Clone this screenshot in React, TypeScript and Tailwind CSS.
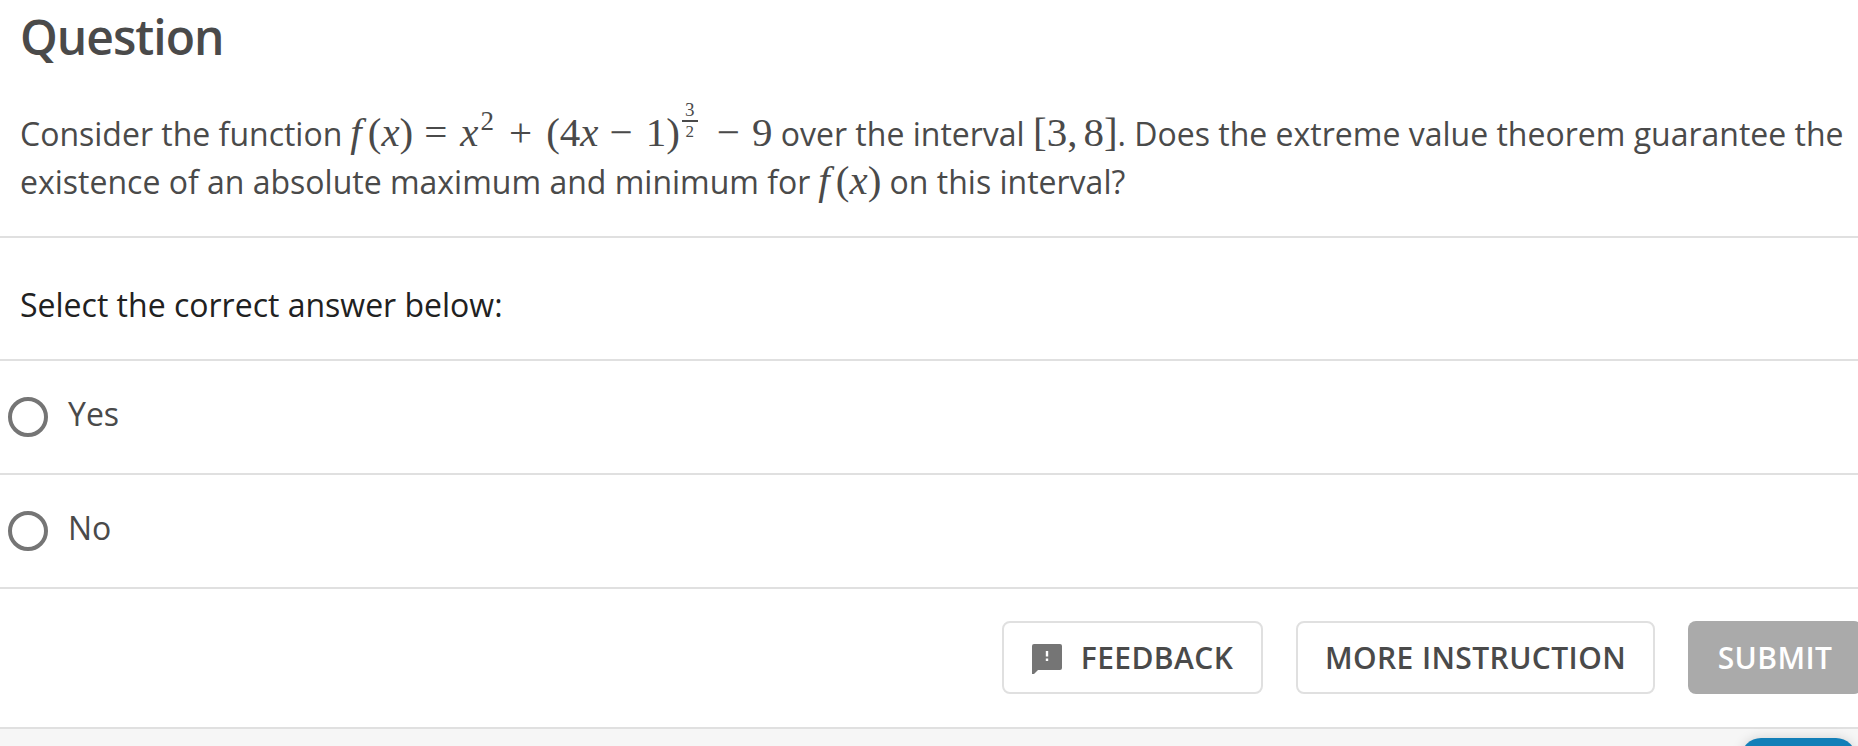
import React from 'react';

const sans = "font-['Open_Sans',sans-serif]";
const serif = "font-['Liberation_Serif',serif] text-[41px] leading-none";

const Mi: React.FC<{ children: React.ReactNode }> = ({ children }) => (
  <span className="italic">{children}</span>
);

const Fx = () => (
  <>
    <span className="ml-[8px] italic">f</span>
    <span className="ml-[6px]">(</span>
    <Mi>x</Mi>)
  </>
);

const Formula = () => (
  <span className={serif}>
    <Fx />
    <span className="ml-[11px]">=</span>
    <span className="ml-[13px]">
      <Mi>x</Mi>
    </span>
    <span className="relative top-[-16px] ml-[2px] text-[27px] leading-none">2</span>
    <span className="ml-[15px]">+</span>
    <span className="ml-[14px]">(</span>4<Mi>x</Mi>
    <span className="ml-[11px]">−</span>
    <span className="ml-[13px]">1</span>)
    <span className="ml-[2px] inline-flex w-[16px] flex-col items-center align-[30px]">
      <span className="w-full border-b-2 border-[#4a4a4a] text-center text-[19px] leading-[20px]">3</span>
      <span className="mt-[1px] text-[17px] leading-[18px]">2</span>
    </span>
    <span className="ml-[19px]">−</span>
    <span className="ml-[12px]">9</span>
  </span>
);

const Option: React.FC<{ label: string }> = ({ label }) => (
  <div className="flex h-[114px] items-center border-b-2 border-[#e0e0e0]">
    <span className="ml-[8px] h-[40px] w-[40px] rounded-full border-[4px] border-[#757575]" />
    <span className="ml-[20px] -mt-[6px] text-[32px] text-[#4a4a4a]">{label}</span>
  </div>
);

const FeedbackIcon = () => (
  <svg width="30" height="30" viewBox="0 0 30 30" className="mr-[19px] mt-[2px]">
    <path d="M2 0h26a2 2 0 0 1 2 2v22a2 2 0 0 1-2 2H6l-4 4h-2V2a2 2 0 0 1 2-2z" fill="#757575" />
    <rect x="13.8" y="7" width="2.4" height="5.5" fill="#fff" />
    <rect x="13.8" y="14.5" width="2.4" height="2.5" fill="#fff" />
  </svg>
);

export default function App() {
  return (
    <div className={`${sans} relative h-[746px] overflow-hidden bg-[#f6f6f6]`}>
      <div className="bg-white">
        <div className="h-[238px] border-b-2 border-[#e0e0e0] px-[20px]">
          <h1 className="pt-[7px] text-[48px] font-semibold leading-[60px] tracking-[-1px] text-[#4a4a4a]">Question</h1>
          <p className="mt-[33px] whitespace-nowrap text-[32px] leading-[48px] text-[#4a4a4a]">
            Consider the function
            <Formula /> over the interval{' '}
            <span className={serif}>
              [3,<span className="ml-[6px]">8</span>]
            </span>
            . Does the extreme value theorem guarantee the
            <br />
            existence of an absolute maximum and minimum for
            <span className={serif}>
              <Fx />
            </span>{' '}
            on this interval?
          </p>
        </div>
        <div className="flex h-[123px] items-center border-b-2 border-[#e0e0e0] px-[20px] pt-[13px]">
          <span className="text-[32px] text-[#212121]">Select the correct answer below:</span>
        </div>
        <Option label="Yes" />
        <Option label="No" />
        <div className="mr-[-4px] flex h-[140px] items-start justify-end gap-[33px] border-b-2 border-[#e0e0e0] pt-[32px]">
          <button className="flex h-[73px] w-[261px] items-center justify-center rounded-[8px] border-2 border-[#e0e0e0] bg-white text-[30px] font-semibold tracking-[0.4px] text-[#4a4a4a]">
            <FeedbackIcon />
            FEEDBACK
          </button>
          <button className="h-[73px] w-[359px] rounded-[8px] border-2 border-[#e0e0e0] bg-white text-[30px] font-semibold tracking-[0.4px] text-[#4a4a4a]">
            MORE INSTRUCTION
          </button>
          <button className="h-[73px] w-[174px] rounded-[8px] bg-[#aaaaaa] text-[30px] font-semibold tracking-[0.4px] text-white">
            SUBMIT
          </button>
        </div>
      </div>
      <div className="absolute bottom-[-20px] right-[2px] h-[28px] w-[115px] rounded-t-[20px] bg-[#127fb8] shadow-[0_0_12px_rgba(0,0,0,0.15)]" />
    </div>
  );
}
